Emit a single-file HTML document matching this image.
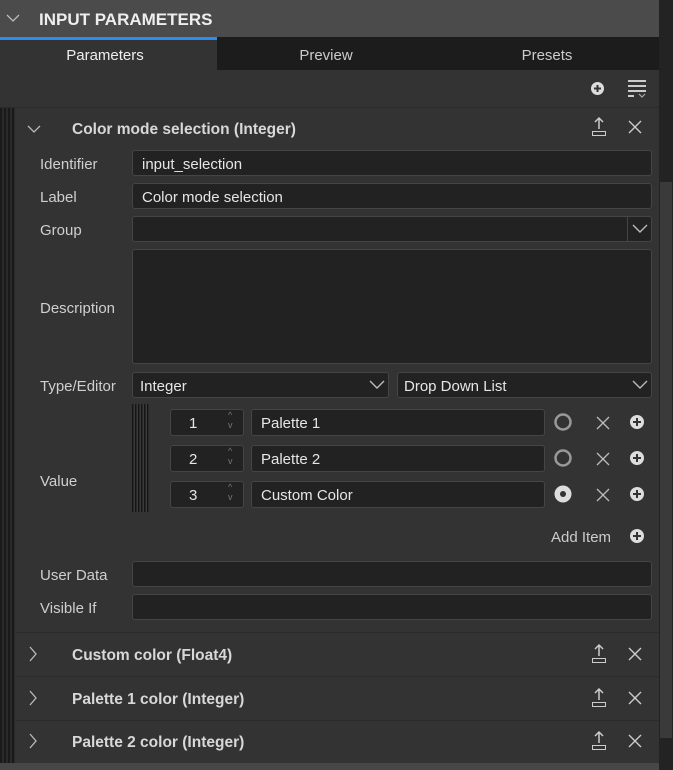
<!DOCTYPE html>
<html><head><style>
*{box-sizing:border-box;margin:0;padding:0}
body{width:673px;height:770px;background:#262626;font-family:"Liberation Sans",sans-serif;color:#ddd;position:relative;overflow:hidden;font-size:15px}
.a{position:absolute}
.inp{position:absolute;background:#222;border:1px solid #454545;border-radius:3px;color:#e6e6e6;font-size:15px;line-height:24px;padding-left:9px;padding-top:2px}
.lbl{position:absolute;left:40px;color:#cfcfcf;font-size:15px}
.title{position:absolute;left:72px;font-weight:bold;font-size:15.5px;color:#d8d8d8}
.row{position:absolute;left:15px;width:644px;height:43px;background:#333;border-top:1px solid #2a2a2a}
</style></head><body>
<div class="a" style="left:0;top:0;width:659px;height:37px;background:#4b4b4b"></div>
<svg class="a" style="left:6px;top:13px" width="14" height="10"><path d="M1 2 L7 8 L13 2" stroke="#bbb" stroke-width="1.3" fill="none"/></svg>
<div class="a" style="left:39px;top:10px;font-weight:bold;font-size:17px;color:#eee">INPUT PARAMETERS</div>
<div class="a" style="left:659px;top:0;width:14px;height:770px;background:#232323"></div>
<div class="a" style="left:660px;top:182px;width:12px;height:556px;background:#3a3a3a"></div>
<div class="a" style="left:0;top:37px;width:659px;height:33px;background:#1c1c1c"></div>
<div class="a" style="left:0;top:37px;width:217px;height:33px;background:#333"></div>
<div class="a" style="left:0;top:37px;width:217px;height:3px;background:#2a8df0"></div>
<div class="a" style="left:0;top:47px;width:210px;text-align:center;color:#eee">Parameters</div>
<div class="a" style="left:217px;top:47px;width:218px;text-align:center;color:#ccc">Preview</div>
<div class="a" style="left:435px;top:47px;width:224px;text-align:center;color:#ccc">Presets</div>
<div class="a" style="left:0;top:70px;width:659px;height:38px;background:#333;border-bottom:1px solid #2a2a2a"></div>
<svg class="a" style="left:590px;top:81px" width="15" height="15"><circle cx="7.5" cy="7.5" r="6.5" fill="#ddd"/><path d="M4 7.5h7M7.5 4v7" stroke="#333" stroke-width="2"/></svg>
<svg class="a" style="left:627px;top:79px" width="22" height="20"><path d="M1 2h18M1 7h18M1 12h18" stroke="#ccc" stroke-width="2"/><path d="M1 17h6" stroke="#ccc" stroke-width="2"/><path d="M12 15l3 3 3-3" stroke="#aaa" stroke-width="1.2" fill="none"/></svg>
<div class="a" style="left:0;top:108px;width:15px;height:655px;background:repeating-linear-gradient(90deg,#1a1a1a 0 2px,#2a2a2a 2px 4px)"></div>
<div class="a" style="left:15px;top:108px;width:644px;height:524px;background:#333"></div>
<svg class="a" style="left:27px;top:124px" width="14" height="10"><path d="M1 2 L7 8 L13 2" stroke="#bbb" stroke-width="1.3" fill="none"/></svg>
<div class="title" style="top:121px">Color mode selection (Integer)</div>
<svg class="a" style="left:590px;top:116px" width="18" height="22"><path d="M9 2v11M5 6l4-4 4 4" stroke="#ccc" stroke-width="1.5" fill="none"/><rect x="2.5" y="15.5" width="13" height="4" stroke="#ccc" fill="none"/></svg>
<svg class="a" style="left:628px;top:120px" width="14" height="14"><path d="M1 1l12 12M13 1L1 13" stroke="#ccc" stroke-width="1.4"/></svg>
<div class="lbl" style="top:156px">Identifier</div>
<div class="inp" style="left:132px;top:150px;width:520px;height:26px">input_selection</div>
<div class="lbl" style="top:189px">Label</div>
<div class="inp" style="left:132px;top:183px;width:520px;height:26px">Color mode selection</div>
<div class="lbl" style="top:222px">Group</div>
<div class="inp" style="left:132px;top:216px;width:520px;height:26px"></div>
<div class="a" style="left:627px;top:217px;width:1px;height:24px;background:#454545"></div>
<svg class="a" style="left:632px;top:224px" width="16" height="10"><path d="M1 1l7 7 7-7" stroke="#bbb" stroke-width="1.4" fill="none"/></svg>
<div class="lbl" style="top:300px">Description</div>
<div class="inp" style="left:132px;top:249px;width:520px;height:115px"></div>
<div class="lbl" style="top:378px">Type/Editor</div>
<div class="inp" style="left:132px;top:372px;width:257px;height:26px;padding-left:7px">Integer</div>
<svg class="a" style="left:369px;top:380px" width="16" height="10"><path d="M1 1l7 7 7-7" stroke="#bbb" stroke-width="1.4" fill="none"/></svg>
<div class="inp" style="left:397px;top:372px;width:255px;height:26px;padding-left:6px">Drop Down List</div>
<svg class="a" style="left:632px;top:380px" width="16" height="10"><path d="M1 1l7 7 7-7" stroke="#bbb" stroke-width="1.4" fill="none"/></svg>
<div class="lbl" style="top:473px">Value</div>
<div class="a" style="left:132px;top:404px;width:17px;height:108px;background:repeating-linear-gradient(90deg,#151515 0 1.5px,#3a3a3a 1.5px 3px)"></div>

<div class="inp" style="left:170px;top:409px;width:74px;height:27px;padding-left:18px">1</div>
<div class="a" style="left:228px;top:410px;color:#777;font-size:9px;line-height:10px">^<br>v</div>
<div class="inp" style="left:251px;top:409px;width:294px;height:27px">Palette 1</div>
<svg class="a" style="left:553px;top:412px" width="20" height="20"><circle cx="10" cy="10" r="7.5" stroke="#999" stroke-width="2.5" fill="none"/></svg>
<svg class="a" style="left:596px;top:416px" width="14" height="14"><path d="M1 1l12 12M13 1L1 13" stroke="#bbb" stroke-width="1.3"/></svg>
<svg class="a" style="left:629px;top:414px" width="16" height="16"><circle cx="8" cy="8" r="7" fill="#ddd"/><path d="M4 8h8M8 4v8" stroke="#333" stroke-width="2"/></svg>

<div class="inp" style="left:170px;top:445px;width:74px;height:27px;padding-left:18px">2</div>
<div class="a" style="left:228px;top:446px;color:#777;font-size:9px;line-height:10px">^<br>v</div>
<div class="inp" style="left:251px;top:445px;width:294px;height:27px">Palette 2</div>
<svg class="a" style="left:553px;top:448px" width="20" height="20"><circle cx="10" cy="10" r="7.5" stroke="#999" stroke-width="2.5" fill="none"/></svg>
<svg class="a" style="left:596px;top:452px" width="14" height="14"><path d="M1 1l12 12M13 1L1 13" stroke="#bbb" stroke-width="1.3"/></svg>
<svg class="a" style="left:629px;top:450px" width="16" height="16"><circle cx="8" cy="8" r="7" fill="#ddd"/><path d="M4 8h8M8 4v8" stroke="#333" stroke-width="2"/></svg>

<div class="inp" style="left:170px;top:481px;width:74px;height:27px;padding-left:18px">3</div>
<div class="a" style="left:228px;top:482px;color:#777;font-size:9px;line-height:10px">^<br>v</div>
<div class="inp" style="left:251px;top:481px;width:294px;height:27px">Custom Color</div>
<svg class="a" style="left:553px;top:484px" width="20" height="20"><circle cx="10" cy="10" r="8.5" fill="#ddd"/><circle cx="10" cy="10" r="3" fill="#333"/></svg>
<svg class="a" style="left:596px;top:488px" width="14" height="14"><path d="M1 1l12 12M13 1L1 13" stroke="#bbb" stroke-width="1.3"/></svg>
<svg class="a" style="left:629px;top:486px" width="16" height="16"><circle cx="8" cy="8" r="7" fill="#ddd"/><path d="M4 8h8M8 4v8" stroke="#333" stroke-width="2"/></svg>

<div class="a" style="left:551px;top:529px;color:#ccc">Add Item</div>
<svg class="a" style="left:629px;top:528px" width="16" height="16"><circle cx="8" cy="8" r="7" fill="#ddd"/><path d="M4 8h8M8 4v8" stroke="#333" stroke-width="2"/></svg>

<div class="lbl" style="top:567px">User Data</div>
<div class="inp" style="left:132px;top:561px;width:520px;height:26px"></div>
<div class="lbl" style="top:600px">Visible If</div>
<div class="inp" style="left:132px;top:594px;width:520px;height:26px"></div>

<div class="row" style="top:632px;height:44px"></div>
<div class="row" style="top:676px;height:44px"></div>
<div class="row" style="top:720px;height:43px"></div>
<div class="a" style="left:0;top:763px;width:659px;height:7px;background:#474747"></div>

<svg class="a" style="left:28px;top:646px" width="10" height="16"><path d="M2 1l6 7-6 7" stroke="#bbb" stroke-width="1.3" fill="none"/></svg>
<div class="title" style="top:647px">Custom color (Float4)</div>
<svg class="a" style="left:590px;top:643px" width="18" height="22"><path d="M9 2v11M5 6l4-4 4 4" stroke="#ccc" stroke-width="1.5" fill="none"/><rect x="2.5" y="15.5" width="13" height="4" stroke="#ccc" fill="none"/></svg>
<svg class="a" style="left:628px;top:647px" width="14" height="14"><path d="M1 1l12 12M13 1L1 13" stroke="#ccc" stroke-width="1.4"/></svg>

<svg class="a" style="left:28px;top:690px" width="10" height="16"><path d="M2 1l6 7-6 7" stroke="#bbb" stroke-width="1.3" fill="none"/></svg>
<div class="title" style="top:691px">Palette 1 color (Integer)</div>
<svg class="a" style="left:590px;top:687px" width="18" height="22"><path d="M9 2v11M5 6l4-4 4 4" stroke="#ccc" stroke-width="1.5" fill="none"/><rect x="2.5" y="15.5" width="13" height="4" stroke="#ccc" fill="none"/></svg>
<svg class="a" style="left:628px;top:691px" width="14" height="14"><path d="M1 1l12 12M13 1L1 13" stroke="#ccc" stroke-width="1.4"/></svg>

<svg class="a" style="left:28px;top:733px" width="10" height="16"><path d="M2 1l6 7-6 7" stroke="#bbb" stroke-width="1.3" fill="none"/></svg>
<div class="title" style="top:734px">Palette 2 color (Integer)</div>
<svg class="a" style="left:590px;top:730px" width="18" height="22"><path d="M9 2v11M5 6l4-4 4 4" stroke="#ccc" stroke-width="1.5" fill="none"/><rect x="2.5" y="15.5" width="13" height="4" stroke="#ccc" fill="none"/></svg>
<svg class="a" style="left:628px;top:734px" width="14" height="14"><path d="M1 1l12 12M13 1L1 13" stroke="#ccc" stroke-width="1.4"/></svg>
</body></html>
